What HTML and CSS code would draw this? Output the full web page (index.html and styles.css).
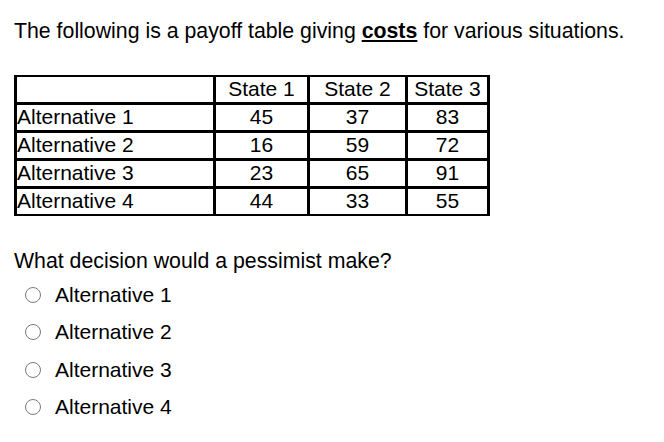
FILE: index.html
```html
<!DOCTYPE html>
<html>
<head>
<meta charset="utf-8">
<link rel="stylesheet" href="styles.css">
</head>
<body>
<div class="page">
  <p class="intro">The following is a payoff table giving <span class="em">costs</span> for various situations.</p>
  <table class="payoff">
    <colgroup>
      <col class="c1"><col class="c2"><col class="c3"><col class="c4">
    </colgroup>
    <tr class="head"><th></th><th>State 1</th><th>State 2</th><th>State 3</th></tr>
    <tr><td class="lbl">Alternative 1</td><td>45</td><td>37</td><td>83</td></tr>
    <tr><td class="lbl">Alternative 2</td><td>16</td><td>59</td><td>72</td></tr>
    <tr><td class="lbl">Alternative 3</td><td>23</td><td>65</td><td>91</td></tr>
    <tr class="last"><td class="lbl">Alternative 4</td><td>44</td><td>33</td><td>55</td></tr>
  </table>
  <p class="question">What decision would a pessimist make?</p>
  <ul class="options">
    <li><span class="radio"></span>Alternative 1</li>
    <li><span class="radio"></span>Alternative 2</li>
    <li><span class="radio"></span>Alternative 3</li>
    <li><span class="radio"></span>Alternative 4</li>
  </ul>
</div>
</body>
</html>
```
FILE: styles.css
```css
html, body { margin: 0; padding: 0; background: #fff; }
body { font-family: "Liberation Sans", Arial, sans-serif; color: #000; }
.page { padding: 19px 0 0 14px; }
.intro { margin: 0; font-size: 21.3px; line-height: 24px; }
.em { font-weight: bold; text-decoration: underline; text-decoration-thickness: 2px; text-underline-offset: 2px; }
.payoff { margin-top: 32px; border-collapse: collapse; font-size: 21px; width: 473px; table-layout: fixed; }
.payoff .c1 { width: 199px; }
.payoff .c2 { width: 94px; }
.payoff .c3 { width: 98px; }
.payoff .c4 { width: 82px; }
.payoff th, .payoff td { border: 3px solid #000; height: 23px; padding: 0 2px 2px; font-weight: normal; text-align: center; line-height: 23px; }
.payoff .head th { border-top-width: 2px; }
.payoff .last td { border-bottom-width: 2px; }
.payoff td.lbl { text-align: left; padding-left: 0; }
.question { margin: 33px 0 0; font-size: 21.3px; line-height: 24px; }
.options { list-style: none; margin: 10px 0 0; padding: 0 0 0 11px; font-size: 21px; }
.options li { display: flex; align-items: center; height: 24px; margin-bottom: 13.3px; }
.radio { width: 14px; height: 14px; border: 1.4px solid #7a7a7a; border-radius: 50%; margin-right: 14px; box-sizing: content-box; }
```
